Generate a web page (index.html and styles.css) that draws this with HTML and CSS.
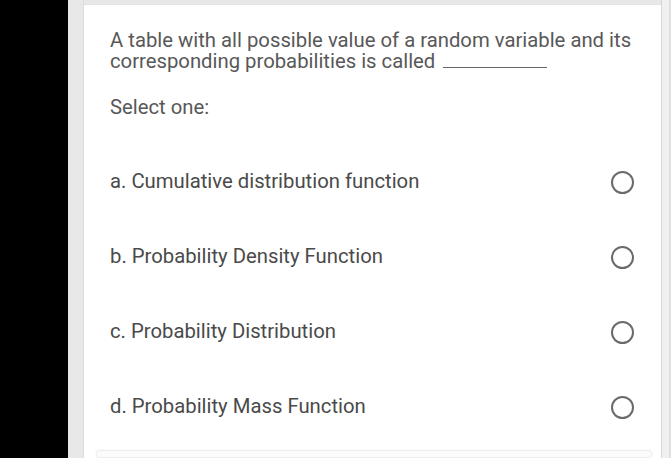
FILE: index.html
```html
<!DOCTYPE html>
<html>
<head>
<meta charset="utf-8">
<link rel="stylesheet" href="styles.css">
</head>
<body>
<div class="screen">
  <div class="side"></div>
  <div class="gutter"></div>
  <div class="card">
    <div class="question">
      <p class="qtext">A table with all possible value of a random variable and its corresponding probabilities is called <span class="blank"></span></p>
      <p class="prompt">Select one:</p>
    </div>
    <div class="options">
      <div class="option"><span>a. Cumulative distribution function</span><span class="radio"></span></div>
      <div class="option"><span>b. Probability Density Function</span><span class="radio"></span></div>
      <div class="option"><span>c. Probability Distribution</span><span class="radio"></span></div>
      <div class="option"><span>d. Probability Mass Function</span><span class="radio"></span></div>
    </div>
    <div class="next"></div>
  </div>
  <div class="rgutter"></div>
</div>
</body>
</html>
```
FILE: styles.css
```css
html, body {
  margin: 0;
  padding: 0;
  background: #000;
}
.screen {
  display: flex;
  width: 671px;
  height: 458px;
  overflow: hidden;
  background: #e8e8e8;
  font-family: Roboto, "Liberation Sans", sans-serif;
}
.side {
  width: 68px;
  background: #000;
  flex: none;
}
.gutter {
  width: 15px;
  background: #e8e8e8;
  flex: none;
  border-right: 1px solid #dcdcdc;
}
.card {
  flex: 1;
  background: #fff;
  margin-top: 4px;
  border-top: 1px solid #e2e2e2;
  display: flex;
  flex-direction: column;
}
.rgutter {
  width: 7px;
  flex: none;
  background: #f0f0f0;
  border-left: 1px solid #d6d6d6;
  border-right: 2px solid #e0e0e0;
}
.question {
  padding: 25px 0 0 26px;
}
.qtext {
  margin: 0;
  font-size: 20.3px;
  line-height: 21px;
  color: #585858;
  width: 540px;
}
.blank {
  display: inline-block;
  width: 104px;
  border-bottom: 1.5px solid #666;
  vertical-align: baseline;
  margin-left: 3px;
}
.prompt {
  margin: 25px 0 0 0;
  font-size: 20.3px;
  line-height: 21px;
  color: #585858;
}
.options {
  display: flex;
  flex-direction: column;
  margin-top: 52px;
  gap: 54px;
  padding: 0 27px 0 26px;
}
.option {
  display: flex;
  justify-content: space-between;
  align-items: center;
  height: 21px;
  font-size: 20.3px;
  color: #4a4a4a;
}
.radio {
  width: 19px;
  height: 19px;
  border: 2.5px solid #6a6a6a;
  border-radius: 50%;
  margin-top: 4px;
}
.next {
  margin: 34px 9px 0 12px;
  height: 40px;
  background: #fbfbfb;
  border: 1px solid #eeeeee;
  border-radius: 3px;
  box-shadow: 0 0 3px rgba(0,0,0,0.05);
}
```
